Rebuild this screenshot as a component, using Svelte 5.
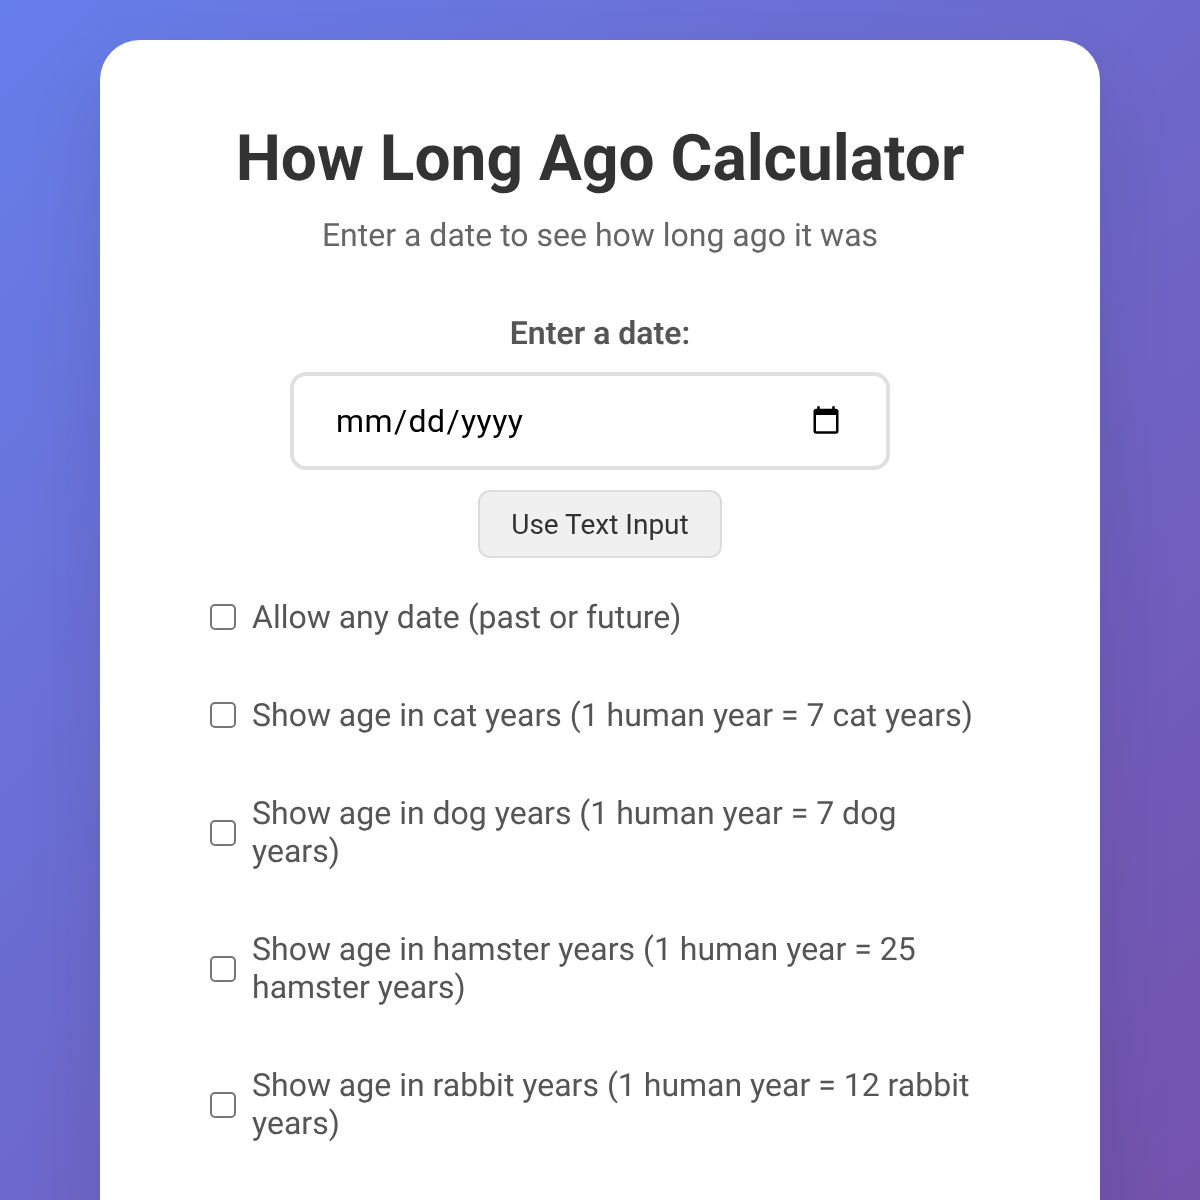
<script>
  const options = [
    'Allow any date (past or future)',
    'Show age in cat years (1 human year = 7 cat years)',
    'Show age in dog years (1 human year = 7 dog years)',
    'Show age in hamster years (1 human year = 25 hamster years)',
    'Show age in rabbit years (1 human year = 12 rabbit years)'
  ];
</script>

<div class="viewport">
  <div class="page">
    <main class="card">
      <h1>How Long Ago Calculator</h1>
      <p class="subtitle">Enter a date to see how long ago it was</p>

      <label class="date-label" for="date">Enter a date:</label>
      <div class="date-row">
        <input id="date" type="date" />
      </div>
      <button type="button" class="toggle">Use Text Input</button>

      <div class="options">
        {#each options as option}
          <label class="option">
            <input type="checkbox" />
            <span>{option}</span>
          </label>
        {/each}
      </div>
    </main>
  </div>
</div>

<style>
  :global(body) {
    margin: 0;
    font-family: Roboto, "Liberation Sans", sans-serif;
    text-rendering: geometricPrecision;
  }

  .viewport {
    height: 1200px;
    overflow: hidden;
  }

  .page {
    box-sizing: border-box;
    height: 1600px;
    padding: 40px 100px;
    background: linear-gradient(135deg, #667eea 0%, #764ba2 100%);
  }

  .card {
    box-sizing: border-box;
    height: 1520px;
    padding: 81px 80px 0;
    display: flex;
    flex-direction: column;
    align-items: center;
    background: #fff;
    border-radius: 40px;
    box-shadow: 0 40px 80px rgba(0, 0, 0, 0.1);
    will-change: transform;
  }

  h1 {
    margin: 0;
    font-size: 64px;
    line-height: 75px;
    font-weight: 700;
    color: #333;
  }

  .subtitle {
    margin: 20px 0 0;
    font-size: 32px;
    line-height: 38px;
    color: #666;
  }

  .date-label {
    margin-top: 60px;
    font-size: 32px;
    line-height: 38px;
    font-weight: 600;
    color: #555;
  }

  .date-row {
    display: flex;
    justify-content: center;
    align-self: stretch;
    padding-right: 20px;
    margin-top: 20px;
  }

  input[type='date'] {
    box-sizing: border-box;
    width: 600px;
    height: 98px;
    padding: 0 42px 0 41px;
    border: 4px solid #e0e0e0;
    border-radius: 16px;
    background: #fff;
    color: #000;
    font-family: inherit;
    font-size: 32px;
    letter-spacing: 0.4px;
  }

  .toggle {
    box-sizing: border-box;
    width: 244px;
    height: 68px;
    margin-top: 20px;
    border: 2px solid #ddd;
    border-radius: 12px;
    background: #f0f0f0;
    color: #333;
    font-family: inherit;
    font-size: 28px;
  }

  .options {
    align-self: stretch;
    margin: 40px 30px 0;
    display: flex;
    flex-direction: column;
    gap: 60px;
  }

  .option {
    display: flex;
    align-items: center;
    gap: 16px;
    font-size: 32px;
    line-height: 38px;
    color: #555;
  }

  input[type='checkbox'] {
    appearance: none;
    flex: none;
    box-sizing: border-box;
    width: 26px;
    height: 26px;
    margin: 2px 0 0;
    border: 2px solid #767676;
    border-radius: 5px;
    background: #fff;
  }

  .option:nth-child(-n + 2) input[type='checkbox'] {
    margin-top: 0;
  }
</style>
